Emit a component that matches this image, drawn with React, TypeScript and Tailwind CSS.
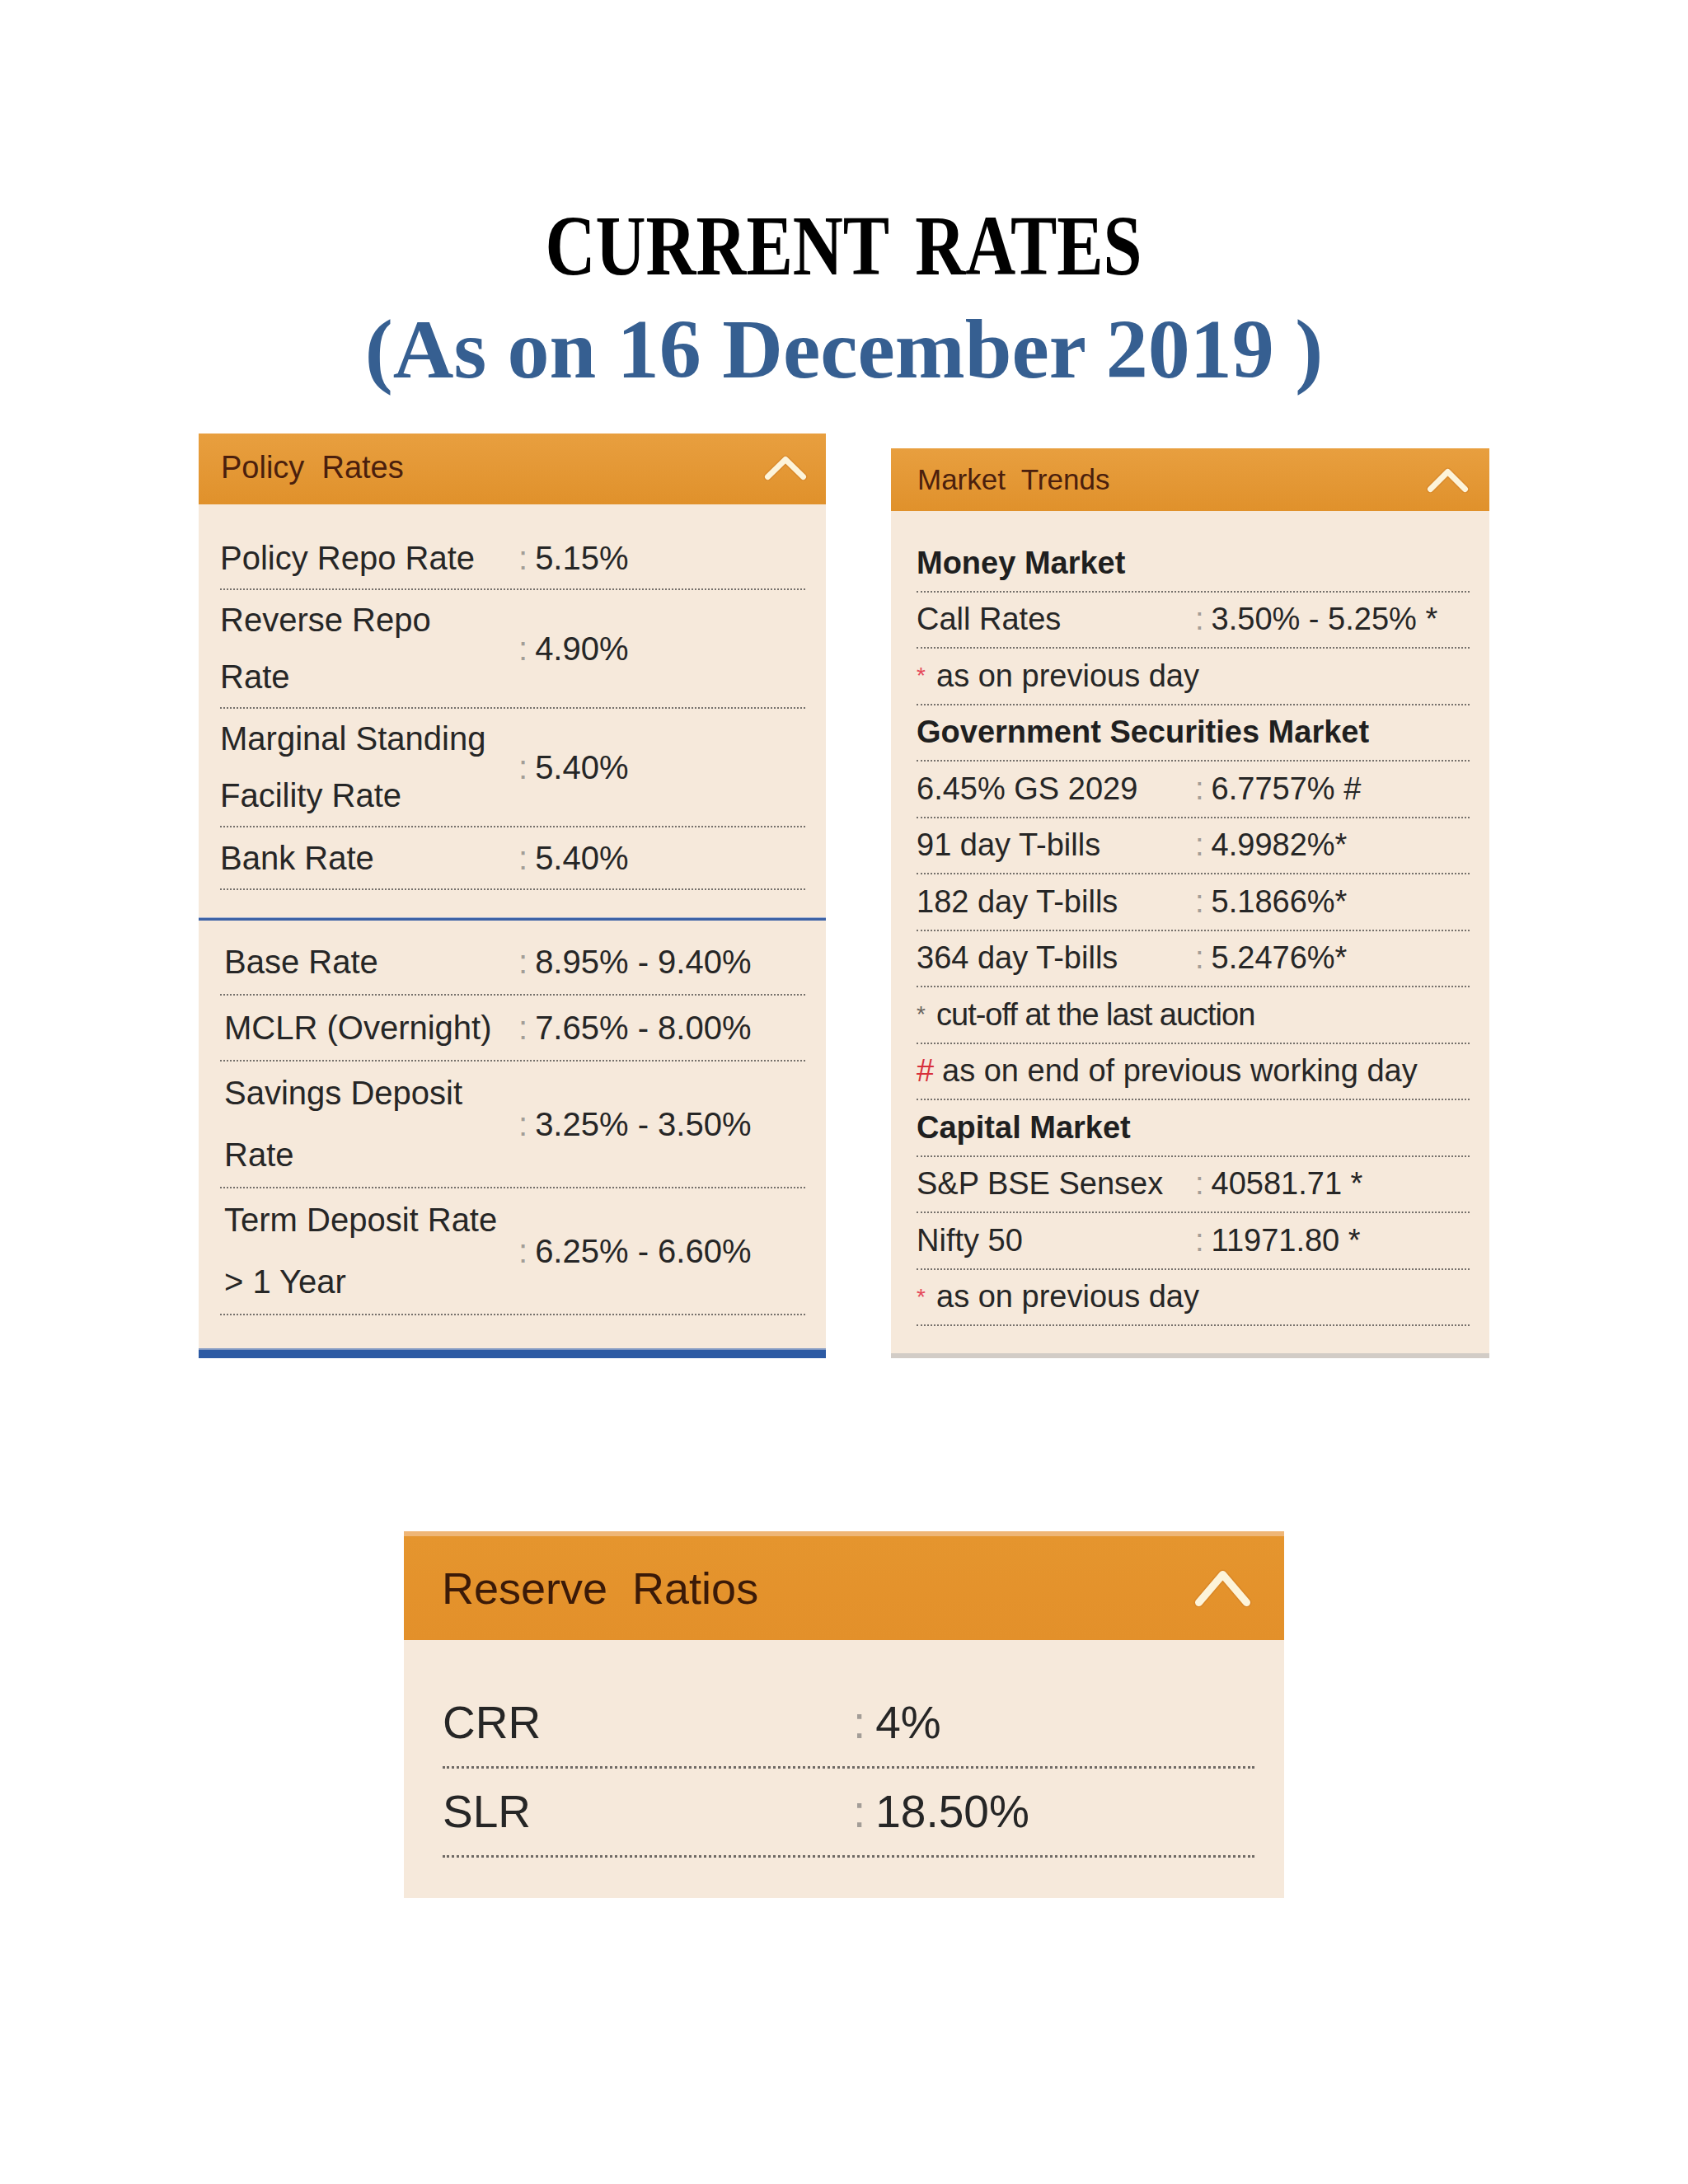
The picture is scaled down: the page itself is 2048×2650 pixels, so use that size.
import React from "react";

type Row = { label: string[]; value: string };

const policyRates: Row[] = [
  { label: ["Policy Repo Rate"], value: "5.15%" },
  { label: ["Reverse Repo", "Rate"], value: "4.90%" },
  { label: ["Marginal Standing", "Facility Rate"], value: "5.40%" },
  { label: ["Bank Rate"], value: "5.40%" },
];

const lendingRates: Row[] = [
  { label: ["Base Rate"], value: "8.95% - 9.40%" },
  { label: ["MCLR (Overnight)"], value: "7.65% - 8.00%" },
  { label: ["Savings Deposit", "Rate"], value: "3.25% - 3.50%" },
  { label: ["Term Deposit Rate", "> 1 Year"], value: "6.25% - 6.60%" },
];

type MarketRow =
  | { kind: "head"; text: string }
  | { kind: "kv"; label: string; value: string }
  | { kind: "note"; mark: string; red: boolean; text: string; tight?: boolean };

const marketRows: MarketRow[] = [
  { kind: "head", text: "Money Market" },
  { kind: "kv", label: "Call Rates", value: "3.50% - 5.25% *" },
  { kind: "note", mark: "*", red: true, text: "as on previous day" },
  { kind: "head", text: "Government Securities Market" },
  { kind: "kv", label: "6.45% GS 2029", value: "6.7757% #" },
  { kind: "kv", label: "91 day T-bills", value: "4.9982%*" },
  { kind: "kv", label: "182 day T-bills", value: "5.1866%*" },
  { kind: "kv", label: "364 day T-bills", value: "5.2476%*" },
  { kind: "note", mark: "*", red: false, text: "cut-off at the last auction", tight: true },
  { kind: "note", mark: "#", red: true, text: "as on end of previous working day" },
  { kind: "head", text: "Capital Market" },
  { kind: "kv", label: "S&P BSE Sensex", value: "40581.71 *" },
  { kind: "kv", label: "Nifty 50", value: "11971.80 *" },
  { kind: "note", mark: "*", red: true, text: "as on previous day" },
];

const reserveRatios = [
  { label: "CRR", value: "4%" },
  { label: "SLR", value: "18.50%" },
];

const Chevron = ({ w, h, sw }: { w: number; h: number; sw: number }) => {
  const pts = `${sw / 2 + 2},${h - sw / 2 - 1} ${w / 2},${sw / 2 + 2} ${w - sw / 2 - 2},${h - sw / 2 - 1}`;
  return (
    <svg width={w} height={h} viewBox={`0 0 ${w} ${h}`} fill="none">
      <polyline points={pts} stroke="#c9741c" strokeWidth={sw + 3} strokeLinecap="round" strokeLinejoin="round" opacity={0.35} />
      <polyline points={pts} stroke="#fdf4da" strokeWidth={sw} strokeLinecap="round" strokeLinejoin="round" />
    </svg>
  );
};

const PolicyRow = ({ row, single, double, lead, shift }: { row: Row; single: string; double: string; lead: string; shift: string }) => (
  <div className={`flex items-center border-b-2 border-dotted border-[#75706b] ${row.label.length > 1 ? double : single}`}>
    <div className={`w-[355px] ${lead} ${shift}`}>
      {row.label.map((l) => (
        <div key={l}>{l}</div>
      ))}
    </div>
    <div className="flex pl-[7px]">
      <span className="text-[#a39d97]">:</span>
      <span className="ml-[9px]">{row.value}</span>
    </div>
  </div>
);

const MarketLine = ({ row }: { row: MarketRow }) => {
  const base = "flex h-[68.5px] items-center border-b-2 border-dotted border-[#75706b]";
  if (row.kind === "head") {
    return (
      <div className={base}>
        <span className="font-bold text-[#1f1f1f]">{row.text}</span>
      </div>
    );
  }
  if (row.kind === "note") {
    return (
      <div className={base}>
        {row.mark === "*" ? (
          <span className={`text-[28px] self-start mt-[12px] w-[24px] ${row.red ? "text-[#e5485a]" : "text-[#6a6560]"}`}>*</span>
        ) : (
          <span className="text-[#d8303c] w-[31px]">#</span>
        )}
        <span className={row.tight ? "tracking-[-1px]" : ""}>{row.text}</span>
      </div>
    );
  }
  return (
    <div className={base}>
      <div className="w-[332px]">{row.label}</div>
      <div className="flex pl-[6px]">
        <span className="text-[#a39d97]">:</span>
        <span className="ml-[9px]">{row.value}</span>
      </div>
    </div>
  );
};

export default function App() {
  return (
    <div className="min-h-[2650px] bg-white pt-[238px] flex flex-col items-center font-['Liberation_Sans',Arial,sans-serif]">
      {/* heading */}
      <h1 className="font-['Liberation_Serif',serif] font-bold text-[103px] leading-[120px] text-black scale-x-[0.82] [word-spacing:14px]">
        CURRENT RATES
      </h1>
      <h2 className="mt-[6px] font-['Liberation_Serif',serif] font-bold text-[102px] leading-[120px] text-[#365f91]">
        (As on 16 December 2019 )
      </h2>

      {/* policy + market */}
      <div className="mt-[42px] flex items-end gap-[79px]">
        <section className="w-[761px] bg-[#f6e9db] text-[#262626]">
          <div className="flex h-[86px] items-center justify-between bg-gradient-to-b from-[#e89f3f] to-[#e0912b] pl-[27px] pr-[22px] pb-[4px]">
            <span className="whitespace-pre text-[38px] text-[#4b1f0d]">Policy  Rates</span>
            <Chevron w={54} h={31} sw={7} />
          </div>
          <div className="pt-[28px] pb-[33px] pl-[26px] pr-[25px] text-[40px]">
            {policyRates.map((r) => (
              <PolicyRow key={r.value + r.label[0]} row={r} single="h-[76px]" double="h-[144px]" lead="leading-[69px]" shift="" />
            ))}
          </div>
          <div className="h-[4px] border-t border-[#9fb0d2] bg-[#3c62a6]" />
          <div className="pt-[11px] pb-[40px] pl-[26px] pr-[25px] text-[40px]">
            {lendingRates.map((r) => (
              <PolicyRow key={r.value} row={r} single="h-[80px]" double="h-[154px]" lead="leading-[75px]" shift="pl-[5px]" />
            ))}
          </div>
          <div className="h-[12px] border-t-2 border-[#7f97c2] bg-[#2c5aa4]" />
        </section>

        <section className="w-[726px] bg-[#f6e9db] text-[#262626]">
          <div className="flex h-[76px] items-center justify-between bg-gradient-to-b from-[#e89f3f] to-[#e0912b] pl-[32px] pr-[24px]">
            <span className="whitespace-pre text-[35px] text-[#4b1f0d]">Market  Trends</span>
            <Chevron w={53} h={31} sw={7} />
          </div>
          <div className="pt-[30px] pb-[33px] pl-[31px] pr-[24px] text-[38px]">
            {marketRows.map((r, i) => (
              <MarketLine key={i} row={r} />
            ))}
          </div>
          <div className="h-[6px] bg-[#d2ccc6]" />
        </section>
      </div>

      {/* reserve ratios */}
      <section className="mt-[210px] w-[1068px] bg-[#f6e9db] text-[#262626]">
        <div className="flex h-[132px] items-center justify-between border-t-[6px] border-[#efb676] bg-gradient-to-b from-[#e5952e] to-[#e3902a] pl-[46px] pr-[39px]">
          <span className="whitespace-pre text-[54px] text-[#3b1a08]">Reserve  Ratios</span>
          <Chevron w={71} h={46} sw={9} />
        </div>
        <div className="pt-[48px] pb-[49px] pl-[47px] pr-[36px] text-[55px]">
          {reserveRatios.map((r) => (
            <div key={r.label} className="flex h-[108px] items-center border-b-[3px] border-dotted border-[#6e6964]">
              <div className="w-[491px]">{r.label}</div>
              <div className="flex pl-[7px]">
                <span className="text-[#a39d97]">:</span>
                <span className="ml-[12px]">{r.value}</span>
              </div>
            </div>
          ))}
        </div>
      </section>
    </div>
  );
}
